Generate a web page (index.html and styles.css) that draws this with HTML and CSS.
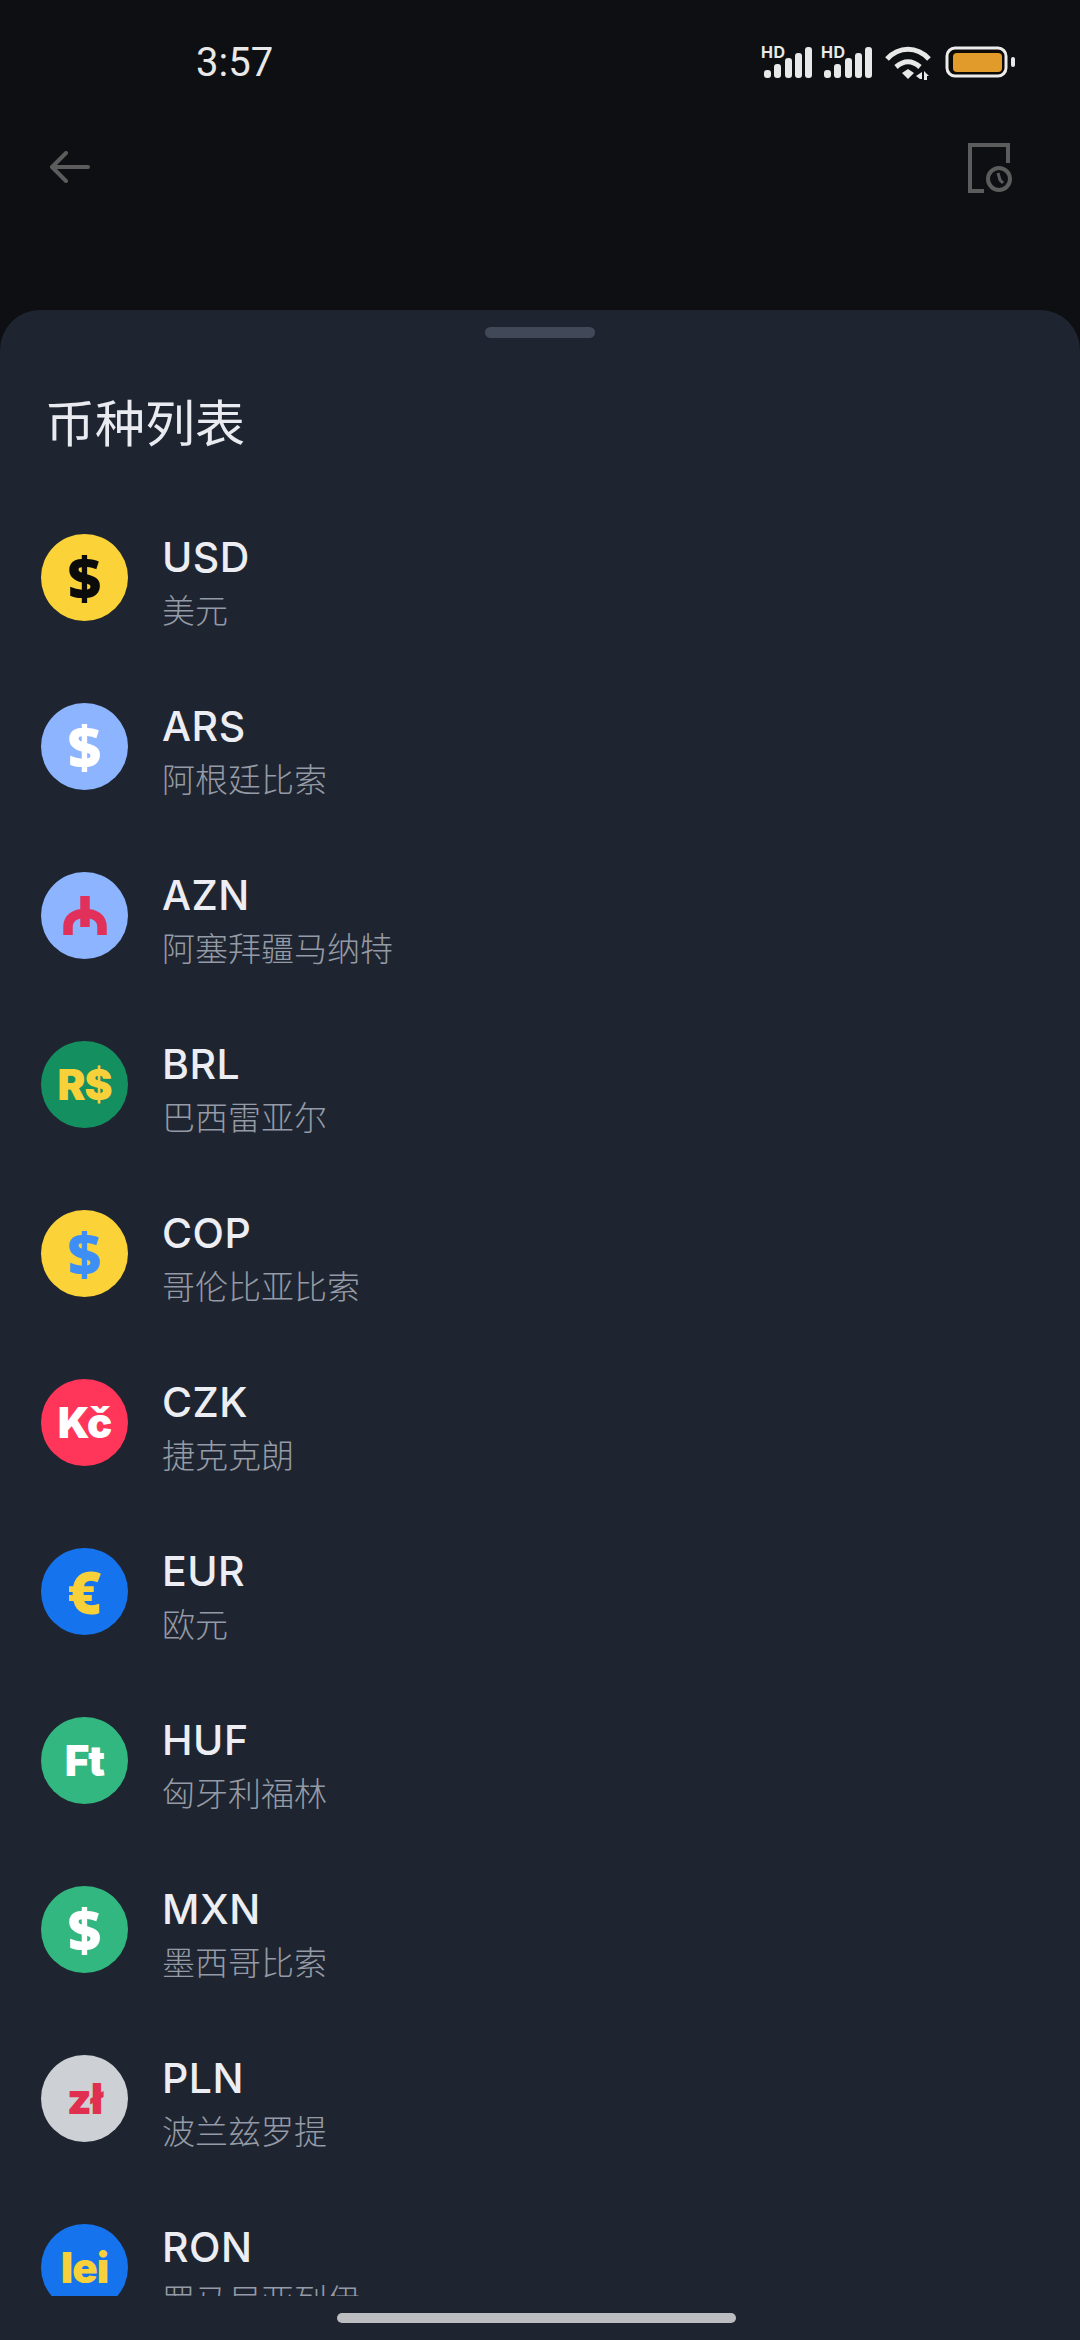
FILE: index.html
```html
<!DOCTYPE html>
<html lang="zh-CN">

<head>
  <meta charset="UTF-8">
  <meta name="viewport" content="width=device-width, initial-scale=1.0">
  <title>币种列表</title>
  <link rel="stylesheet" href="styles.css">
</head>

<body>
  <!-- Status bar -->
  <div class="status-bar">
    <span class="time">3:57</span>
    <svg class="status-icons" width="260" height="40" viewBox="760 43 260 40">
      <g fill="#e8e8e8">
        <text class="hd" x="761" y="58">HD</text>
        <rect x="764" y="70" width="7" height="8" rx="3"/>
        <rect x="774" y="64" width="7" height="14" rx="3"/>
        <rect x="785" y="58" width="7" height="20" rx="3"/>
        <rect x="795" y="53" width="7" height="25" rx="3"/>
        <rect x="805" y="47" width="7" height="31" rx="3"/>
        <text class="hd" x="821" y="58">HD</text>
        <rect x="824" y="70" width="7" height="8" rx="3"/>
        <rect x="834" y="64" width="7" height="14" rx="3"/>
        <rect x="845" y="58" width="7" height="20" rx="3"/>
        <rect x="855" y="53" width="7" height="25" rx="3"/>
        <rect x="865" y="47" width="7" height="31" rx="3"/>
        <path d="M908 69l6 4-6 6-6-6z"/>
        <path d="M922 72v7h-2l-4-3zM924 71l5 5h-2v4h-3z"/>
      </g>
      <g fill="none" stroke="#e8e8e8" stroke-width="5">
        <path d="M887 59c12-13 30-13 42 0"/>
        <path d="M896 67c8-7 16-7 24 0"/>
      </g>
      <rect x="947" y="48" width="59" height="28" rx="8" fill="#0d0b08" stroke="#ececec" stroke-width="3"/>
      <rect x="953" y="53" width="49" height="19" rx="4" fill="#e09b2a"/>
      <rect x="1011" y="57" width="4" height="10" rx="2" fill="#e8e8e8"/>
    </svg>
  </div>

  <!-- Top nav, dimmed behind the sheet -->
  <div class="nav">
    <svg class="back" width="41" height="32" viewBox="0 0 41 32" fill="none" stroke="#5c5c5c" stroke-width="4" stroke-linecap="round" stroke-linejoin="round">
      <path d="M39 16H3M17 2L3 16l14 14"/>
    </svg>
    <svg width="44" height="50" viewBox="0 0 44 50" fill="none" stroke="#5c5c5c" stroke-width="4">
      <path d="M40 20V2H2v46h14"/>
      <circle cx="31" cy="36" r="11"/>
      <path d="M30 30l2 7 3 3" stroke-width="3"/>
    </svg>
  </div>

  <!-- Currency list sheet -->
  <div class="sheet">
    <div class="handle"></div>
    <h1 class="sheet-title">币种列表</h1>

    <div class="list">
      <div class="row">
        <div class="coin coin-yellow text-black">$</div>
        <div class="info"><div class="code">USD</div><div class="name">美元</div></div>
      </div>
      <div class="row">
        <div class="coin coin-sky text-white">$</div>
        <div class="info"><div class="code">ARS</div><div class="name">阿根廷比索</div></div>
      </div>
      <div class="row">
        <div class="coin coin-sky">
          <svg width="44" height="39" viewBox="0 0 44 39" fill="none" stroke="#e1305a" stroke-width="9.500">
            <path d="M5 39V31C5 22 12 17.500 22 17.500s17 4.500 17 13.500v8M22 0v31"/>
          </svg>
        </div>
        <div class="info"><div class="code">AZN</div><div class="name">阿塞拜疆马纳特</div></div>
      </div>
      <div class="row">
        <div class="coin coin-forest text-gold small">R$</div>
        <div class="info"><div class="code">BRL</div><div class="name">巴西雷亚尔</div></div>
      </div>
      <div class="row">
        <div class="coin coin-yellow text-blue">$</div>
        <div class="info"><div class="code">COP</div><div class="name">哥伦比亚比索</div></div>
      </div>
      <div class="row">
        <div class="coin coin-red text-white small">Kč</div>
        <div class="info"><div class="code">CZK</div><div class="name">捷克克朗</div></div>
      </div>
      <div class="row">
        <div class="coin coin-blue text-gold">€</div>
        <div class="info"><div class="code">EUR</div><div class="name">欧元</div></div>
      </div>
      <div class="row">
        <div class="coin coin-green text-white small">Ft</div>
        <div class="info"><div class="code">HUF</div><div class="name">匈牙利福林</div></div>
      </div>
      <div class="row">
        <div class="coin coin-green text-white">$</div>
        <div class="info"><div class="code">MXN</div><div class="name">墨西哥比索</div></div>
      </div>
      <div class="row">
        <div class="coin coin-grey text-red small">zł</div>
        <div class="info"><div class="code">PLN</div><div class="name">波兰兹罗提</div></div>
      </div>
      <div class="row">
        <div class="coin coin-blue text-gold small">lei</div>
        <div class="info"><div class="code">RON</div><div class="name">罗马尼亚列伊</div></div>
      </div>
    </div>

    <div class="home-bar"></div>
  </div>
</body>

</html>
```

FILE: styles.css
```css
/* Page */
body {
  margin: 0;
  width: 1080px;
  height: 2340px;
  overflow: hidden;
  background: #0d0f13;
  font-family: Inter, "Noto Sans CJK SC", sans-serif;
}

/* Status bar */
.status-bar {
  height: 124px;
  box-sizing: border-box;
  padding: 43px 60px 0 196px;
  display: flex;
  justify-content: space-between;
  align-items: flex-start;
}

.time {
  font-family: Roboto, sans-serif;
  font-size: 40px;
  line-height: 40px;
  color: #e8e8e8;
}

.hd {
  font-family: Inter, sans-serif;
  font-size: 16px;
  font-weight: 700;
  letter-spacing: 0.5px;
}

/* Top nav */
.nav {
  height: 186px;
  box-sizing: border-box;
  padding: 19px 68px 0 49px;
  display: flex;
  justify-content: space-between;
  align-items: flex-start;
}

.back {
  margin-top: 8px;
}

/* Sheet */
.sheet {
  height: 2030px;
  background: #1f2530;
  border-radius: 40px 40px 0 0;
  display: flex;
  flex-direction: column;
}

.handle {
  width: 110px;
  height: 11px;
  margin: 17px auto 0;
  border-radius: 6px;
  background: #414958;
}

.sheet-title {
  margin: 58px 0 0 45px;
  height: 97px;
  font-size: 50px;
  line-height: 56px;
  font-weight: 400;
  color: #e9ebf0;
}

/* List, cut off above the home bar */
.list {
  height: 1803px;
  overflow: hidden;
}

.row {
  height: 169px;
  display: flex;
  align-items: center;
  padding-left: 41px;
}

.coin {
  width: 87px;
  height: 87px;
  border-radius: 50%;
  flex-shrink: 0;
  display: flex;
  align-items: center;
  justify-content: center;
  font-family: "Open Sans", sans-serif;
  font-size: 58px;
  font-weight: 800;
  line-height: 1;
}

.coin.small {
  font-family: Inter, sans-serif;
  font-size: 42px;
  font-weight: 900;
  letter-spacing: -1px;
}

.coin-yellow { background: #fbd338; }
.coin-sky { background: #8cb4ff; }
.coin-forest { background: #149060; }
.coin-red { background: #ff3559; }
.coin-blue { background: #1673ee; }
.coin-green { background: #33b780; }
.coin-grey { background: #cdd0d5; }

.text-black { color: #0b0b0b; }
.text-white { color: #ffffff; }
.text-gold { color: #f8d03a; }
.text-blue { color: #3d8ef5; }
.text-red { color: #e1304f; }

.info {
  margin-left: 34px;
  padding-top: 8px;
}

.code {
  font-size: 41px;
  line-height: 48px;
  font-weight: 500;
  letter-spacing: 0.5px;
  color: #eceef3;
}

.name {
  margin-top: 10px;
  font-size: 33px;
  line-height: 40px;
  font-weight: 300;
  color: #959ba6;
}

.home-bar {
  width: 399px;
  height: 10px;
  margin: 17px 0 0 337px;
  border-radius: 5px;
  background: #bcbdc1;
}
```
